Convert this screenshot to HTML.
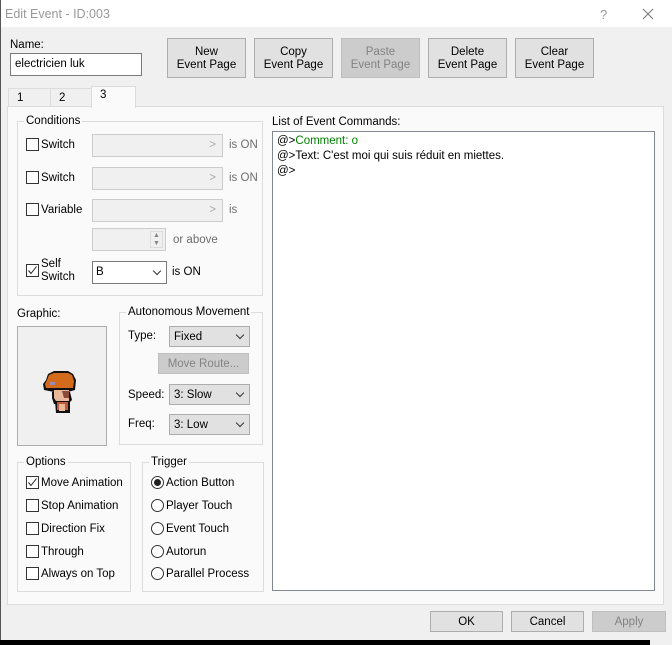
<!DOCTYPE html>
<html><head><meta charset="utf-8"><style>
*{box-sizing:border-box;margin:0;padding:0}
body{width:672px;height:645px;background:#f0f0f0;font-family:"Liberation Sans",sans-serif;font-size:11.5px;color:#000;position:relative;overflow:hidden}
.a{position:absolute;white-space:nowrap;line-height:17px}
.btn{position:absolute;background:#e1e1e1;border:1px solid #adadad;text-align:center;line-height:13px;display:flex;align-items:center;justify-content:center;padding-top:1px}
.dis{background:#cccccc;border-color:#bfbfbf;color:#838383}
.grp{position:absolute;border:1px solid #dcdcdc}
.gl{position:absolute;background:#fafafa;padding:0 2px;top:-8px;left:6px;line-height:15px}
.cb{position:absolute;width:13px;height:13px;border:1px solid #333;background:#fff}
.rd{position:absolute;width:13px;height:13px;border:1px solid #333;border-radius:50%;background:#fff}
.dd{position:absolute;background:#f0f0f0;border:1px solid #cccccc}
.cmb{position:absolute;background:#e1e1e1;border:1px solid #adadad;padding-left:4px;line-height:21px}
.chev{position:absolute;right:6px;top:5px;width:6px;height:6px;border-right:1px solid #333;border-bottom:1px solid #333;transform:rotate(45deg)}
.g{color:#6d6d6d}
</style></head><body>
<div class="a" style="left:0;top:0;width:672px;height:27px;background:#fff"></div>
<div class="a" style="left:0;top:0;width:1px;height:645px;background:#555"></div>
<div class="a" style="left:5px;top:6px;color:#999;font-size:12.5px">Edit Event - ID:003</div>
<div class="a" style="left:600px;top:6px;color:#999;font-size:13px">?</div>
<svg class="a" style="left:642px;top:8px" width="12" height="12"><path d="M1 1L11 11M11 1L1 11" stroke="#777" stroke-width="1"/></svg>
<div class="a" style="left:10px;top:37px">Name:</div>
<div class="a" style="left:10px;top:53px;width:132px;height:23px;background:#fff;border:1px solid #7a7a7a;padding:2px 4px">electricien luk</div>
<div class="btn" style="left:167px;top:38px;width:79px;height:40px">New<br>Event Page</div>
<div class="btn" style="left:254px;top:38px;width:79px;height:40px">Copy<br>Event Page</div>
<div class="btn dis" style="left:341px;top:38px;width:79px;height:40px">Paste<br>Event Page</div>
<div class="btn" style="left:428px;top:38px;width:79px;height:40px">Delete<br>Event Page</div>
<div class="btn" style="left:515px;top:38px;width:79px;height:40px">Clear<br>Event Page</div>
<!-- tabs -->
<div class="a" style="left:8px;top:88px;width:43px;height:19px;border:1px solid #dcdcdc;background:#f0f0f0;padding:1px 8px">1</div>
<div class="a" style="left:50px;top:88px;width:42px;height:19px;border:1px solid #dcdcdc;background:#f0f0f0;padding:1px 8px">2</div>
<div class="a" style="left:7px;top:106px;width:657px;height:499px;border:1px solid #dcdcdc;background:#fafafa"></div>
<div class="a" style="left:91px;top:86px;width:45px;height:22px;border:1px solid #dcdcdc;border-bottom:none;background:#fafafa;padding:0 8px">3</div>
<!-- conditions -->
<div class="grp" style="left:17px;top:121px;width:246px;height:175px"><span class="gl">Conditions</span></div>
<div class="cb" style="left:26px;top:138px"></div><div class="a" style="left:41px;top:137px">Switch</div>
<div class="dd" style="left:92px;top:134px;width:131px;height:23px"><span class="a" style="right:6px;top:2px;color:#aaa">&gt;</span></div><div class="a g" style="left:229px;top:137px">is ON</div>
<div class="cb" style="left:26px;top:171px"></div><div class="a" style="left:41px;top:170px">Switch</div>
<div class="dd" style="left:92px;top:167px;width:131px;height:23px"><span class="a" style="right:6px;top:2px;color:#aaa">&gt;</span></div><div class="a g" style="left:229px;top:170px">is ON</div>
<div class="cb" style="left:26px;top:203px"></div><div class="a" style="left:41px;top:202px">Variable</div>
<div class="dd" style="left:92px;top:199px;width:131px;height:23px"><span class="a" style="right:6px;top:2px;color:#aaa">&gt;</span></div><div class="a g" style="left:229px;top:202px">is</div>
<div class="dd" style="left:92px;top:228px;width:74px;height:23px;border-color:#ccc"><span class="a" style="left:57px;top:2px;width:13px;height:17px;border:1px solid #ddd;font-size:7px;color:#888;line-height:8px;text-align:center">▲<br>▼</span></div><div class="a g" style="left:173px;top:232px">or above</div>
<div class="cb" style="left:26px;top:264px"><svg width="11" height="11" style="position:absolute;left:0;top:0"><path d="M1.5 5.5L4 8.5L9.5 1.5" stroke="#222" fill="none"/></svg></div>
<div class="a" style="left:41px;top:258px;line-height:13px">Self<br>Switch</div>
<div class="a" style="left:92px;top:261px;width:75px;height:23px;background:#fff;border:1px solid #7a7a7a;padding:2px 3px">B<span class="chev" style="top:6px;right:6px"></span></div>
<div class="a" style="left:172px;top:264px">is ON</div>
<!-- commands -->
<div class="a" style="left:272px;top:114px">List of Event Commands:</div>
<div class="a" style="left:272px;top:131px;width:383px;height:460px;background:#fff;border:1px solid #828790"></div>
<div class="a" style="left:277px;top:133px">@&gt;<span style="color:#008000">Comment: o</span></div>
<div class="a" style="left:277px;top:148px">@&gt;Text: C'est moi qui suis réduit en miettes.</div>
<div class="a" style="left:277px;top:163px">@&gt;</div>
<!-- graphic -->
<div class="a" style="left:17px;top:306px">Graphic:</div>
<div class="a" style="left:17px;top:326px;width:90px;height:120px;background:#f0f0f0;border:1px solid #adadad"></div>
<svg class="a" style="left:42px;top:370px" width="36" height="46">
<path d="M4 10L6 4L12 1L26 1L31 4L34 10L33 20L26 22L12 22L2 20L1 14Z" fill="#111"/>
<path d="M5 10L7 5L12 3L26 3L30 5L32 11L31 18L12 18L4 18L3 14Z" fill="#d46a1c"/>
<path d="M8 12L13 12L13 15L8 15Z" fill="#9a8ab8"/>
<path d="M10 22L28 22L30 30L26 34L12 34L10 28Z" fill="#111"/>
<path d="M12 20L27 20L27 31L14 31L12 28Z" fill="#e8b898"/>
<path d="M20 21L27 21L27 28L22 28Z" fill="#8a4a3a"/>
<path d="M13 31L28 31L28 43L14 43Z" fill="#111"/>
<path d="M15 32L26 32L26 40L15 40Z" fill="#c05a3a"/>
<path d="M17 34L23 34L23 41L17 41Z" fill="#e8b898"/>
</svg>
<!-- autonomous -->
<div class="grp" style="left:119px;top:312px;width:144px;height:133px"><span class="gl">Autonomous Movement</span></div>
<div class="a" style="left:128px;top:328px">Type:</div>
<div class="cmb" style="left:169px;top:326px;width:81px;height:21px">Fixed<span class="chev"></span></div>
<div class="btn dis" style="left:158px;top:353px;width:91px;height:21px">Move Route...</div>
<div class="a" style="left:128px;top:387px">Speed:</div>
<div class="cmb" style="left:169px;top:384px;width:81px;height:21px">3: Slow<span class="chev"></span></div>
<div class="a" style="left:128px;top:416px">Freq:</div>
<div class="cmb" style="left:169px;top:414px;width:81px;height:21px">3: Low<span class="chev"></span></div>
<!-- options -->
<div class="grp" style="left:17px;top:462px;width:114px;height:130px"><span class="gl">Options</span></div>
<div class="cb" style="left:26px;top:476px"><svg width="11" height="11" style="position:absolute;left:0;top:0"><path d="M1.5 5.5L4 8.5L9.5 1.5" stroke="#222" fill="none"/></svg></div><div class="a" style="left:41px;top:475px">Move Animation</div>
<div class="cb" style="left:26px;top:499px"></div><div class="a" style="left:41px;top:498px">Stop Animation</div>
<div class="cb" style="left:26px;top:522px"></div><div class="a" style="left:41px;top:521px">Direction Fix</div>
<div class="cb" style="left:26px;top:545px"></div><div class="a" style="left:41px;top:544px">Through</div>
<div class="cb" style="left:26px;top:567px"></div><div class="a" style="left:41px;top:566px">Always on Top</div>
<!-- trigger -->
<div class="grp" style="left:142px;top:462px;width:122px;height:130px"><span class="gl">Trigger</span></div>
<div class="rd" style="left:151px;top:476px"><span class="a" style="left:2px;top:2px;width:7px;height:7px;border-radius:50%;background:#222"></span></div><div class="a" style="left:166px;top:475px">Action Button</div>
<div class="rd" style="left:151px;top:499px"></div><div class="a" style="left:166px;top:498px">Player Touch</div>
<div class="rd" style="left:151px;top:522px"></div><div class="a" style="left:166px;top:521px">Event Touch</div>
<div class="rd" style="left:151px;top:545px"></div><div class="a" style="left:166px;top:544px">Autorun</div>
<div class="rd" style="left:151px;top:567px"></div><div class="a" style="left:166px;top:566px">Parallel Process</div>
<!-- bottom -->
<div class="btn" style="left:430px;top:611px;width:73px;height:21px">OK</div>
<div class="btn" style="left:511px;top:611px;width:73px;height:21px">Cancel</div>
<div class="btn dis" style="left:592px;top:611px;width:74px;height:21px">Apply</div>
<div class="a" style="left:0;top:640px;width:650px;height:5px;background:#000"></div>
</body></html>
